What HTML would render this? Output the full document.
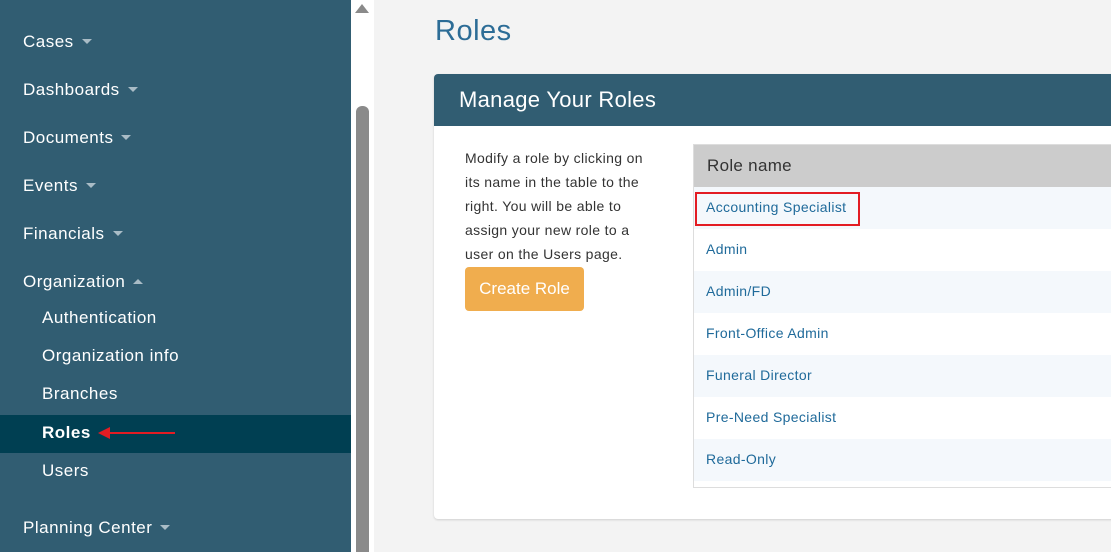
<!DOCTYPE html>
<html><head><style>
*{margin:0;padding:0;box-sizing:border-box}
html,body{width:1111px;height:552px;overflow:hidden}
body{background:#f3f3f3;font-family:"Liberation Sans",sans-serif;position:relative}
.side{position:absolute;left:0;top:0;width:351px;height:552px;background:#315d72}
.it{position:absolute;left:23px;color:#fff;font-size:17px;line-height:20px;letter-spacing:0.5px}
.sub{left:42px}
.car{display:inline-block;width:0;height:0;border-left:5px solid transparent;border-right:5px solid transparent;border-top:5px solid #a9bcc6;margin-left:8px;vertical-align:3px}
.up{border-top:0;border-bottom:5px solid #a9bcc6}
.act{position:absolute;left:0;top:415px;width:351px;height:38px;background:#003f52}
.sb{position:absolute;left:351px;top:0;width:23px;height:552px;background:#fff}
.thumb{position:absolute;left:356px;top:106px;width:13px;height:446px;background:#8a8a8a;border-radius:6px 6px 0 0}
.tri{position:absolute;left:355px;top:4px;border-left:7px solid transparent;border-right:7px solid transparent;border-bottom:9px solid #8a8a8a}
h1{position:absolute;left:435px;top:15px;font-weight:normal;font-size:29px;color:#2c6c96;letter-spacing:0.5px}
.panel{position:absolute;left:434px;top:74px;width:700px;height:445px;background:#fff;border-radius:4px;box-shadow:0 1px 2px rgba(0,0,0,.15);overflow:hidden}
.ph{height:52px;background:#315d72;color:#fff;font-size:22px;padding:13px 0 0 25px;letter-spacing:0.3px}
.desc{position:absolute;left:31px;top:72px;width:220px;font-size:14px;line-height:24px;color:#333;letter-spacing:0.35px}
.btn{position:absolute;left:31px;top:193px;width:119px;height:44px;background:#f0ad4e;border-radius:4px;color:#fff;font-size:17px;line-height:44px;text-align:center}
.tbl{position:absolute;left:259px;top:70px;width:500px;height:344px;border:1px solid #ddd}
.th{height:42px;background:#ccc;font-size:17px;color:#333;padding:11px 0 0 13px;letter-spacing:0.3px}
.r{height:42px;font-size:14px;color:#1f6a9a;padding:12px 0 0 12px;letter-spacing:0.35px}
.s{background:#f4f8fc}
.red{position:absolute;left:695px;top:192px;width:165px;height:34px;border:2px solid #e31c23}
.arrow{position:absolute;left:96px;top:426px}
</style></head><body>
<div class="side">
<div class="it" style="top:32px">Cases<span class="car"></span></div>
<div class="it" style="top:80px">Dashboards<span class="car"></span></div>
<div class="it" style="top:128px">Documents<span class="car"></span></div>
<div class="it" style="top:176px">Events<span class="car"></span></div>
<div class="it" style="top:224px">Financials<span class="car"></span></div>
<div class="it" style="top:272px">Organization<span class="car up"></span></div>
<div class="it sub" style="top:308px">Authentication</div>
<div class="it sub" style="top:346px">Organization info</div>
<div class="it sub" style="top:384px">Branches</div>
<div class="act"></div>
<div class="it sub" style="top:423px;font-weight:bold">Roles</div>
<svg class="arrow" width="80" height="14"><path d="M2 7 L14 1 L14 13 Z" fill="#e31c23"/><rect x="12" y="6" width="67" height="2" fill="#e31c23"/></svg>
<div class="it sub" style="top:461px">Users</div>
<div class="it" style="top:518px">Planning Center<span class="car"></span></div>
</div>
<div class="sb"></div><div class="tri"></div><div class="thumb"></div>
<h1>Roles</h1>
<div class="panel">
<div class="ph">Manage Your Roles</div>
<div class="desc">Modify a role by clicking on<br>its name in the table to the<br>right. You will be able to<br>assign your new role to a<br>user on the Users page.</div>
<div class="btn">Create Role</div>
<div class="tbl">
<div class="th">Role name</div>
<div class="r s">Accounting Specialist</div>
<div class="r">Admin</div>
<div class="r s">Admin/FD</div>
<div class="r">Front-Office Admin</div>
<div class="r s">Funeral Director</div>
<div class="r">Pre-Need Specialist</div>
<div class="r s">Read-Only</div>
</div>
</div>
<div class="red"></div>
</body></html>
